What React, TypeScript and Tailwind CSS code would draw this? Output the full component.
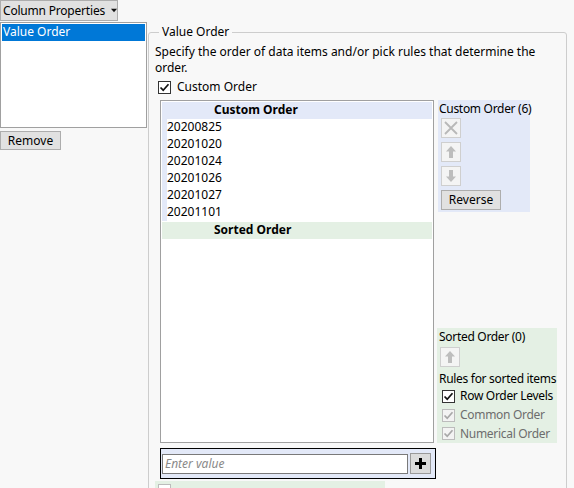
import React from "react";

const ITEMS = ["20200825", "20201020", "20201024", "20201026", "20201027", "20201101"];

function Check({ disabled = false }: { disabled?: boolean }) {
  return (
    <span
      className={`flex h-[13px] w-[13px] shrink-0 items-center justify-center border ${
        disabled ? "border-[#bcbcbc] bg-[#f3f3f3]" : "border-[#333333] bg-white"
      }`}
    >
      <svg width="11" height="11" viewBox="0 0 11 11">
        <path
          d="M1.5 5.5 L4.2 8.2 L9.5 2.2"
          fill="none"
          stroke={disabled ? "#a8a8a8" : "#111111"}
          strokeWidth="1.7"
        />
      </svg>
    </span>
  );
}

function IconButton({ children }: { children: React.ReactNode }) {
  return (
    <div className="flex h-[20px] w-[20px] items-center justify-center border border-[#cfcfcf] bg-[#f4f4f4]">
      {children}
    </div>
  );
}

const UpArrow = () => (
  <svg width="12" height="14" viewBox="0 0 12 14">
    <path d="M6 1 L11 6.5 L8 6.5 L8 13 L4 13 L4 6.5 L1 6.5 Z" fill="#bdbdbd" />
  </svg>
);

const DownArrow = () => (
  <svg width="12" height="14" viewBox="0 0 12 14">
    <path d="M6 13 L11 7.5 L8 7.5 L8 1 L4 1 L4 7.5 L1 7.5 Z" fill="#bdbdbd" />
  </svg>
);

export default function App() {
  return (
    <div
      className="flex h-[488px] w-[574px] overflow-hidden whitespace-nowrap bg-[#f8f8f8] text-[12px] leading-[16px] text-black"
      style={{ fontFamily: '"Noto Sans", "Open Sans", sans-serif' }}
    >
      {/* left: property list */}
      <div className="w-[148px] shrink-0">
        <div className="flex h-[21px] w-[118px] items-center gap-[6px] border border-[#adadad] bg-[#e1e1e1] pl-[2px]">
          <span className="tracking-[-0.2px]">Column Properties</span>
          <svg width="9" height="5" viewBox="0 0 9 5">
            <path d="M0 0 H9 L4.5 5 Z" fill="#111" />
          </svg>
        </div>
        <div className="mt-[1px] h-[106px] w-[147px] border border-[#a0a0a0] bg-white p-[1px]">
          <div className="h-[17px] bg-[#0078d7] pl-[1px] text-white">Value Order</div>
        </div>
        <div className="mt-[3px] flex h-[19px] w-[61px] items-center justify-center border border-[#adadad] bg-[#e1e1e1]">
          Remove
        </div>
      </div>

      {/* right: value order group */}
      <fieldset className="mt-[24px] h-[500px] w-[419px] shrink-0 rounded-t-[3px] border border-[#cdcdcd] pl-[6px]">
        <legend className="ml-[4px] px-[3px]">Value Order</legend>
        <div className="mt-[4px] whitespace-normal pr-[20px]">
          Specify the order of data items and/or pick rules that determine the order.
        </div>
        <div className="mt-[3px] flex items-center gap-[6px] pl-[3px]">
          <Check />
          <span>Custom Order</span>
        </div>

        <div className="mt-[5px] flex gap-[4px] pl-[5px]">
          {/* list */}
          <div className="h-[343px] w-[274px] border border-[#a0a0a0] bg-white p-[1px]">
            <div className="bg-[#e3e9f8] pl-[5px]">
              <div className="h-[17px] pl-[47px] font-bold">Custom Order</div>
              {ITEMS.map((v) => (
                <div key={v} className="h-[17px] bg-white">
                  {v}
                </div>
              ))}
            </div>
            <div className="mt-[1px] h-[17px] bg-[#e4f0e4] pl-[52px] font-bold">Sorted Order</div>
          </div>

          {/* side controls */}
          <div className="flex h-[343px] flex-col justify-between">
            <div className="flex h-[112px] w-[92px] flex-col bg-[#e3e9f8] pl-[3px] pt-[1px]">
              <div className="-ml-[2px] h-[16px] leading-[16px] tracking-[-0.3px]">Custom Order (6)</div>
              <div className="mt-[1px] flex flex-col gap-[4px]">
                <IconButton>
                  <svg width="16" height="16" viewBox="0 0 16 16">
                    <path d="M2 2 L14 14 M14 2 L2 14" stroke="#b8b8b8" strokeWidth="1.8" />
                  </svg>
                </IconButton>
                <IconButton>
                  <UpArrow />
                </IconButton>
                <IconButton>
                  <DownArrow />
                </IconButton>
                <div className="flex h-[20px] w-[60px] items-center justify-center border border-[#adadad] bg-[#e1e1e1]">
                  Reverse
                </div>
              </div>
            </div>

            <div className="-ml-[1px] flex h-[115px] w-[120px] flex-col bg-[#e4f0e4] pl-[2px] pt-[1px] tracking-[-0.3px]">
              <div className="leading-[16px]">Sorted Order (0)</div>
              <div className="mt-[2px] pl-[1px]">
                <IconButton>
                  <UpArrow />
                </IconButton>
              </div>
              <div className="mt-[3px] leading-[17px]">Rules for sorted items</div>
              <div className="flex h-[19px] items-center gap-[5px] pl-[3px]">
                <Check />
                <span>Row Order Levels</span>
              </div>
              <div className="flex h-[19px] items-center gap-[5px] pl-[3px] text-[#6d6d6d]">
                <Check disabled />
                <span>Common Order</span>
              </div>
              <div className="flex h-[19px] items-center gap-[5px] pl-[3px] text-[#6d6d6d]">
                <Check disabled />
                <span>Numerical Order</span>
              </div>
            </div>
          </div>
        </div>

        {/* add value */}
        <div className="ml-[5px] mt-[5px] flex h-[31px] w-[276px] items-center gap-[2px] border border-black bg-[#e3e9f8] pl-[1px]">
          <div className="flex h-[20px] w-[246px] items-center border border-[#7a7a7a] bg-white pl-[2px] italic text-[#8a8a8a]">
            Enter value
          </div>
          <div className="flex h-[21px] w-[21px] items-center justify-center border border-[#9a9a9a] bg-[#dcdcdc]">
            <svg width="13" height="13" viewBox="0 0 13 13">
              <path d="M6.5 1 V12 M1 6.5 H12" stroke="#000" strokeWidth="3" />
            </svg>
          </div>
        </div>

        <div className="mt-[2px] h-[20px] w-[230px] bg-[#e4f0e4] pl-[3px] pt-[3px]">
          <span className="block h-[13px] w-[13px] border border-[#bcbcbc] bg-white" />
        </div>
      </fieldset>
    </div>
  );
}
